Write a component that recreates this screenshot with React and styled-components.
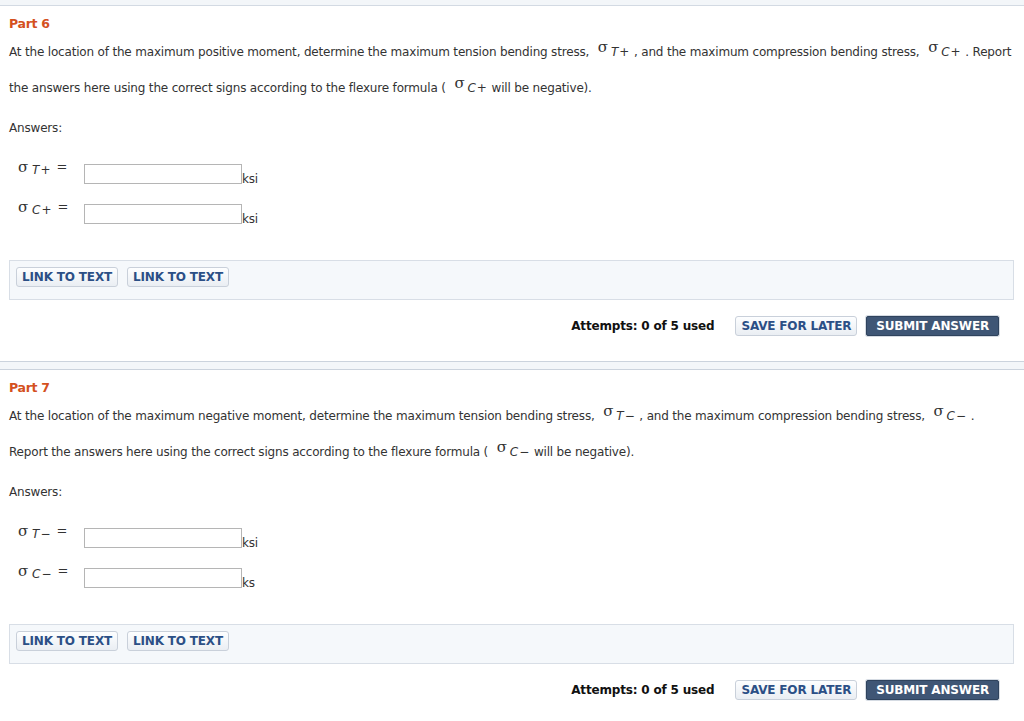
import styled, { createGlobalStyle } from 'styled-components'

const GlobalStyle = createGlobalStyle`
  body {
    margin: 0;
    background: #fff;
    font-family: 'DejaVu Sans', Verdana, sans-serif;
    font-size: 12px;
    letter-spacing: -0.18px;
    color: #333;
  }
`

const parts = [
  {
    id: 6,
    sign: '+',
    lead: 'At the location of the maximum positive moment, determine the maximum tension bending stress,',
    mid: ', and the maximum compression bending stress,',
    tail: '. Report',
    line2: 'the answers here using the correct signs according to the flexure formula (',
    units: ['ksi', 'ksi'],
  },
  {
    id: 7,
    sign: '\u2212',
    lead: 'At the location of the maximum negative moment, determine the maximum tension bending stress,',
    mid: ', and the maximum compression bending stress,',
    tail: '.',
    line2: 'Report the answers here using the correct signs according to the flexure formula (',
    units: ['ksi', 'ks'],
  },
]

const Sym = ({ sub, sign }) => (
  <MathWrap>
    <Sigma>σ</Sigma>
    <Sub>
      <i>{sub}</i>
      {sign}
    </Sub>
  </MathWrap>
)

const App = () => {
  return (
    <Page>
      <GlobalStyle />
      <TopStrip />
      {parts.map((part, i) => {
        const { id, sign, lead, mid, tail, line2, units } = part
        return (
          <div key={id}>
            {i > 0 && <Divider />}
            <Section>
              <Title>Part {id}</Title>
              <Question>
                {lead} <Sym sub='T' sign={sign} /> {mid} <Sym sub='C' sign={sign} /> {tail}
                <br />
                {line2} <Sym sub='C' sign={sign} />  will be negative).
              </Question>
              <Label>Answers:</Label>
              <Answers>
                {['T', 'C'].map((s, k) => (
                  <Row key={s}>
                    <RowSym>
                      <RowSigma>σ</RowSigma>
                      <RowSub>
                        <i>{s}</i>
                        {sign}
                      </RowSub>
                      <Eq>=</Eq>
                    </RowSym>
                    <Input type='text' />
                    <Unit>{units[k]}</Unit>
                  </Row>
                ))}
              </Answers>
              <LinkPanel>
                <LinkBtn>LINK TO TEXT</LinkBtn>
                <LinkBtn>LINK TO TEXT</LinkBtn>
              </LinkPanel>
              <Footer>
                <Attempts>Attempts: 0 of 5 used</Attempts>
                <LinkBtn>SAVE FOR LATER</LinkBtn>
                <SubmitBtn>SUBMIT ANSWER</SubmitBtn>
              </Footer>
            </Section>
          </div>
        )
      })}
    </Page>
  )
}

const Page = styled.div`
  width: 1024px;
  min-height: 721px;
  overflow: hidden;
`

const TopStrip = styled.div`
  height: 5px;
  background: #f3f6f9;
  border-bottom: 1px solid #d3dae3;
`

const Divider = styled.div`
  height: 7px;
  background: #f3f6f9;
  border-top: 1px solid #cbd3dd;
  border-bottom: 1px solid #cbd3dd;
`

const Section = styled.section`
  padding: 10px 10px 0 9px;
`

const Title = styled.h3`
  margin: 0;
  font-size: 12.5px;
  letter-spacing: -0.3px;
  font-weight: bold;
  color: #d4511f;
  line-height: 16px;
`

const Question = styled.p`
  margin: 2px 0 0;
  line-height: 35px;
  font-size: 12px;
  color: #333;
  white-space: nowrap;
`

const MathWrap = styled.span`
  display: inline-block;
  margin: 0 0 0 5px;
  color: #333;
`

const Sigma = styled.span`
  font-family: 'DejaVu Serif', serif;
  font-size: 15px;
  position: relative;
  top: -4px;
`

const Sub = styled.span`
  margin-left: 3px;
  font-size: 12px;
  letter-spacing: 1px;
`

const Label = styled.div`
  margin-top: 14px;
  line-height: 16px;
`

const Answers = styled.div`
  padding: 28px 0 0 9px;
  display: flex;
  flex-direction: column;
  gap: 20px;
`

const Row = styled.div`
  display: flex;
  align-items: flex-end;
  height: 20px;
`

const RowSym = styled.div`
  width: 66px;
  align-self: flex-start;
  display: flex;
  align-items: baseline;
  position: relative;
  top: -4px;
`

const RowSigma = styled.span`
  font-family: 'DejaVu Serif', serif;
  font-size: 15px;
  position: relative;
  top: -2px;
`

const RowSub = styled.span`
  margin-left: 4px;
  font-size: 12px;
  letter-spacing: 1px;
`

const Eq = styled.span`
  margin-left: 5px;
  font-size: 13px;
  position: relative;
  top: -3px;
`

const Input = styled.input`
  box-sizing: border-box;
  width: 158px;
  height: 20px;
  margin: 0;
  border: 1px solid #b5b5b5;
  background: #fff;
`

const Unit = styled.span`
  line-height: 12px;
  margin-bottom: -1px;
  font-size: 12px;
`

const LinkPanel = styled.div`
  margin-top: 36px;
  height: 40px;
  box-sizing: border-box;
  padding: 6px 6px;
  display: flex;
  align-items: flex-start;
  gap: 9px;
  background: #f5f8fb;
  border: 1px solid #d8dee6;
`

const LinkBtn = styled.button`
  font-family: 'DejaVu Sans', Verdana, sans-serif;
  font-size: 12px;
  letter-spacing: -0.17px;
  font-weight: bold;
  color: #2b4f86;
  background: linear-gradient(#fdfeff, #eaeef3);
  border: 1px solid #c9d0da;
  border-radius: 3px;
  padding: 0 5px;
  height: 20px;
  line-height: 18px;
  cursor: pointer;
`

const Footer = styled.div`
  display: flex;
  justify-content: flex-end;
  align-items: center;
  gap: 9px;
  padding: 16px 15px 0 0;
  height: 20px;
  margin-bottom: 25px;
`

const Attempts = styled.span`
  font-weight: bold;
  color: #111;
  margin-right: 12px;
`

const SubmitBtn = styled.button`
  font-family: 'DejaVu Sans', Verdana, sans-serif;
  font-size: 12px;
  letter-spacing: -0.17px;
  font-weight: bold;
  color: #fff;
  background: #3f5675;
  border: 1px solid #2f435d;
  box-shadow: 0 0 0 1px #d5dbe3;
  border-radius: 2px;
  padding: 0 9px;
  height: 20px;
  line-height: 18px;
  cursor: pointer;
`

export default App
